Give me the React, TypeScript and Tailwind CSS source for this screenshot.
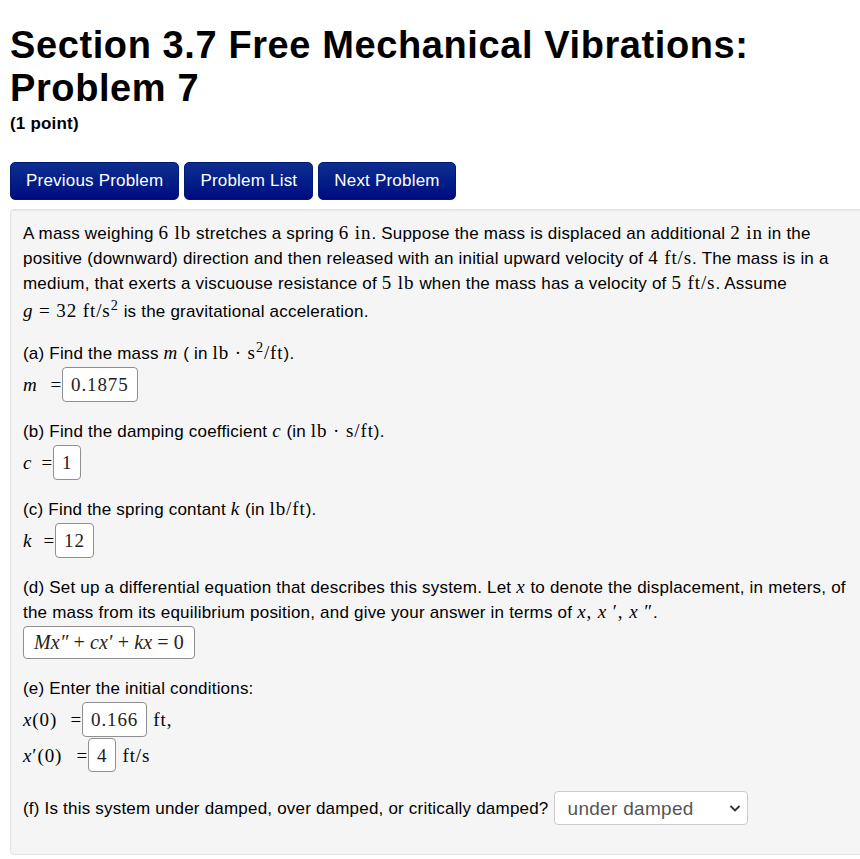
import type { ReactNode } from "react";

const serif = "font-['Liberation_Serif','Times_New_Roman',serif]";

function M({ children, i }: { children: ReactNode; i?: boolean }) {
  return (
    <span
      className={
        i
          ? `${serif} text-[19px] italic leading-none tracking-[0.9px]`
          : `${serif} text-[19px] leading-none tracking-[0.9px]`
      }
    >
      {children}
    </span>
  );
}

function AnswerBox({ children }: { children: ReactNode }) {
  return (
    <span
      className={`${serif} inline-flex h-full items-center rounded-[4px] border border-[#8f8f8f] bg-white px-[8px] text-[19px] tracking-[0.9px] text-[#222]`}
    >
      {children}
    </span>
  );
}

function Row({
  label,
  width,
  value,
  unit,
  className,
}: {
  label: ReactNode;
  width: string;
  value: string;
  unit?: ReactNode;
  className: string;
}) {
  return (
    <div className={`flex items-stretch ${className}`}>
      <span className={`flex items-center justify-between ${width}`}>
        {label}
        <M>=</M>
      </span>
      <AnswerBox>{value}</AnswerBox>
      {unit && <span className="ml-[6px] flex items-center">{unit}</span>}
    </div>
  );
}

export default function App() {
  return (
    <div className="min-h-[859px] w-[860px] overflow-hidden bg-white font-['Liberation_Sans',Arial,sans-serif] text-black">
      <h1 className="ml-[10px] pt-[24px] text-[38px] font-bold leading-[43px] tracking-[0.6px]">
        Section 3.7 Free Mechanical Vibrations:
        <br />
        Problem 7
      </h1>
      <div className="ml-[10px] mt-[4px] text-[17px] font-bold leading-[20px] tracking-[0.2px]">
        (1 point)
      </div>

      <div className="ml-[10px] mt-[28px] flex gap-[5px]">
        {["Previous Problem", "Problem List", "Next Problem"].map((t) => (
          <button
            key={t}
            type="button"
            className="h-[38px] rounded-[5px] border border-[#001a70] bg-linear-to-b from-[#0f2e90] to-[#000880] px-[15px] text-[17px] tracking-[0.2px] text-white"
          >
            {t}
          </button>
        ))}
      </div>

      <div className="ml-[10px] mt-[9px] w-[880px] rounded-[4px] border border-[#e3e3e3] bg-[#f5f5f5] px-[12px] pb-[29px] pt-[11px] text-[17px] leading-[25px] tracking-[0.2px] shadow-[inset_0_1px_1px_rgba(0,0,0,0.05)]">
        <p>
          A mass weighing <M>6 lb</M> stretches a spring <M>6 in</M>. Suppose
          the mass is displaced an additional <M>2 in</M> in the
          <br />
          positive (downward) direction and then released with an initial
          upward velocity of <M>4 ft/s</M>. The mass is in a
          <br />
          medium, that exerts a viscuouse resistance of <M>5 lb</M> when the
          mass has a velocity of <M>5 ft/s</M>. Assume
          <br />
          <span className="inline-block pt-[3px]">
            <M i>g</M>
            <M>
              {" "}= 32 ft/s<sup>2</sup>
            </M>
          </span>{" "}
          is the gravitational acceleration.
        </p>

        <div className="mt-[17px] h-[25px]">
          (a) Find the mass <M i>m</M> ( in{" "}
          <M>
            lb · s<sup>2</sup>/ft
          </M>
          ).
        </div>
        <Row
          className="mt-[1px] h-[35px]"
          width="w-[39px]"
          label={<M i>m</M>}
          value="0.1875"
        />

        <div className="mt-[17px] h-[25px]">
          (b) Find the damping coefficient <M i>c</M> (in <M>lb · s/ft</M>).
        </div>
        <Row
          className="mt-[1px] h-[35px]"
          width="w-[30px]"
          label={<M i>c</M>}
          value="1"
        />

        <div className="mt-[17px] h-[25px]">
          (c) Find the spring contant <M i>k</M> (in <M>lb/ft</M>).
        </div>
        <Row
          className="mt-[1px] h-[35px]"
          width="w-[32px]"
          label={<M i>k</M>}
          value="12"
        />

        <div className="mt-[17px]">
          (d) Set up a differential equation that describes this system. Let{" "}
          <M i>x</M> to denote the displacement, in meters, of
          <br />
          the mass from its equilibrium position, and give your answer in
          terms of{" "}
          <M>
            <i>x</i>, <i>x</i> ′, <i>x</i> ″
          </M>
          .
        </div>
        <div className="mt-[1px] flex h-[33px]">
          <span
            className={`${serif} inline-flex h-full items-center rounded-[4px] border border-[#8f8f8f] bg-white px-[10px] text-[20px] text-[#222]`}
          >
            <i>Mx″</i>
            <span className="mx-[5px]">+</span>
            <i>cx′</i>
            <span className="mx-[5px]">+</span>
            <i>kx</i>
            <span className="mx-[5px]">=</span>0
          </span>
        </div>

        <div className="mt-[17px] h-[25px]">(e) Enter the initial conditions:</div>
        <Row
          className="mt-[1px] h-[35px]"
          width="w-[59px]"
          label={
            <M>
              <i>x</i>(0)
            </M>
          }
          value="0.166"
          unit={<M>ft,</M>}
        />
        <Row
          className="mt-[1px] h-[34px]"
          width="w-[65px]"
          label={
            <M>
              <i>x</i>′(0)
            </M>
          }
          value="4"
          unit={<M>ft/s</M>}
        />

        <div className="mt-[19px] flex h-[34px] items-center gap-[5px]">
          <span>
            (f) Is this system under damped, over damped, or critically damped?
          </span>
          <span className="relative inline-block h-full">
            <select
              defaultValue="under"
              className="h-full w-[194px] appearance-none rounded-[4px] border border-[#cccccc] bg-white pl-[13px] text-[19px] tracking-[0.3px] text-[#555]"
            >
              <option value="under">under damped</option>
              <option value="over">over damped</option>
              <option value="critical">critically damped</option>
            </select>
            <svg
              className="pointer-events-none absolute right-[7px] top-[12px]"
              width="12"
              height="10"
              viewBox="0 0 12 10"
            >
              <path
                d="M1.5 3 L6 7.5 L10.5 3"
                fill="none"
                stroke="#333"
                strokeWidth="1.8"
              />
            </svg>
          </span>
        </div>
      </div>
    </div>
  );
}
